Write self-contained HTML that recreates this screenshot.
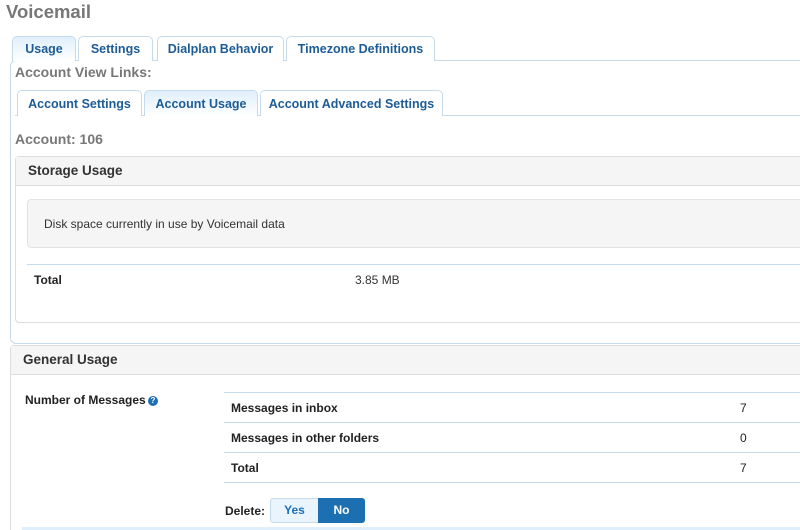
<!DOCTYPE html>
<html style="width:800px;height:530px;overflow:hidden"><head><meta charset="utf-8"><style>
*{box-sizing:border-box;margin:0;padding:0}
body{width:800px;height:530px;overflow:hidden;background:#fff;font-family:"Liberation Sans",sans-serif;font-size:12px;color:#222;position:relative}
.a{position:absolute}
.t{position:absolute;font-weight:bold;color:#1d5c96;font-size:12.5px;text-align:center;border:1px solid #c5dbec;border-bottom:none;border-radius:5px 5px 0 0;background:#fff;line-height:24px}
.t.on{background:linear-gradient(#dfeffc,#fff)}
.g{color:#777;font-weight:bold}
b{font-weight:bold}
</style></head><body>
<div class="a g" style="left:6px;top:1px;font-size:18.5px">Voicemail</div>
<div class="a" style="left:10px;top:60px;width:800px;height:284px;border:1px solid #c5dbec;border-radius:6px"></div>
<div class="t on" style="left:12px;top:36px;width:64px;height:25px">Usage</div>
<div class="t" style="left:78px;top:36px;width:75px;height:25px">Settings</div>
<div class="t" style="left:157px;top:36px;width:127px;height:25px">Dialplan Behavior</div>
<div class="t" style="left:286px;top:36px;width:149px;height:25px">Timezone Definitions</div>
<div class="a g" style="left:15px;top:64px;font-size:14px">Account View Links:</div>
<div class="a" style="left:15px;top:115px;width:790px;border-top:1px solid #c5dbec"></div>
<div class="t" style="left:17px;top:90px;width:125px;height:26px;line-height:26px">Account Settings</div>
<div class="t on" style="left:144px;top:90px;width:114px;height:26px;line-height:26px">Account Usage</div>
<div class="t" style="left:260px;top:90px;width:183px;height:26px;line-height:26px">Account Advanced Settings</div>
<div class="a g" style="left:15px;top:131px;font-size:14px">Account: 106</div>
<div class="a" style="left:15px;top:156px;width:800px;height:167px;border:1px solid #ddd;border-radius:4px"></div>
<div class="a" style="left:16px;top:157px;width:800px;height:29px;background:#f5f5f5;border-bottom:1px solid #ddd"></div>
<div class="a" style="left:28px;top:163px;font-size:13.5px;font-weight:bold;color:#333">Storage Usage</div>
<div class="a" style="left:27px;top:199px;width:780px;height:49px;background:#f5f5f5;border:1px solid #e3e3e3;border-radius:4px"></div>
<div class="a" style="left:44px;top:217px;color:#333">Disk space currently in use by Voicemail data</div>
<div class="a" style="left:27px;top:264px;width:780px;border-top:1px solid #c5dbec"></div>
<div class="a" style="left:34px;top:273px"><b>Total</b></div>
<div class="a" style="left:355px;top:273px;color:#333">3.85 MB</div>
<div class="a" style="left:10px;top:345px;width:800px;height:200px;border:1px solid #ddd;border-radius:4px"></div>
<div class="a" style="left:11px;top:346px;width:800px;height:29px;background:#f5f5f5;border-bottom:1px solid #ddd"></div>
<div class="a" style="left:23px;top:352px;font-size:13.5px;font-weight:bold;color:#333">General Usage</div>
<div class="a" style="left:25px;top:393px"><b>Number of Messages</b></div>
<div class="a" style="left:148px;top:396px;width:10px;height:10px;border-radius:50%;background:#1d6fb8;color:#fff;font-size:8px;font-weight:bold;text-align:center;line-height:10px">?</div>
<div class="a" style="left:224px;top:392px;width:580px;border-top:1px solid #c5dbec"></div>
<div class="a" style="left:224px;top:422px;width:580px;border-top:1px solid #c5dbec"></div>
<div class="a" style="left:224px;top:452px;width:580px;border-top:1px solid #c5dbec"></div>
<div class="a" style="left:224px;top:482px;width:580px;border-top:1px solid #c5dbec"></div>
<div class="a" style="left:231px;top:401px"><b>Messages in inbox</b></div>
<div class="a" style="left:231px;top:431px"><b>Messages in other folders</b></div>
<div class="a" style="left:231px;top:461px"><b>Total</b></div>
<div class="a" style="left:740px;top:401px">7</div>
<div class="a" style="left:740px;top:431px">0</div>
<div class="a" style="left:740px;top:461px">7</div>
<div class="a" style="left:225px;top:504px"><b>Delete:</b></div>
<div class="a" style="left:270px;top:498px;width:49px;height:25px;background:#eaf4fc;border:1px solid #c5dbec;border-radius:3px 0 0 3px;color:#1d6fb8;font-weight:bold;text-align:center;line-height:23px">Yes</div>
<div class="a" style="left:318px;top:498px;width:47px;height:25px;background:#1c6fb0;border-radius:0 3px 3px 0;color:#fff;font-weight:bold;text-align:center;line-height:25px">No</div>
<div class="a" style="left:22px;top:527px;width:790px;height:3px;background:#dfeffc"></div>
</body></html>
